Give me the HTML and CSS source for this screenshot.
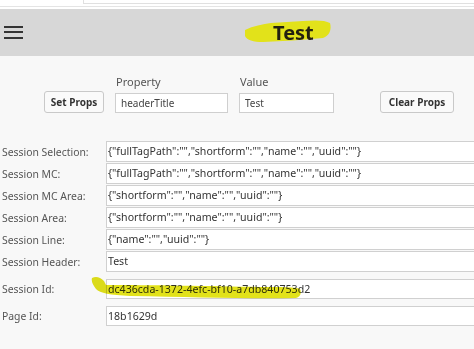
FILE: index.html
```html
<!DOCTYPE html>
<html lang="en">
<head>
    <meta charset="UTF-8">
    <meta name="viewport" content="width=device-width, initial-scale=1.0">
    <title>Session Props</title>
    <link rel="stylesheet" href="styles.css">
</head>
<body>
    <div class="chrome">
        <div class="tab-edge"></div>
    </div>

    <div class="header">
        <svg class="menu-icon" width="19" height="14" viewBox="0 0 19 14">
            <rect x="0" y="0" width="19" height="2" fill="#333"/>
            <rect x="0" y="5" width="19" height="2" fill="#333"/>
            <rect x="0" y="11" width="19" height="2" fill="#333"/>
        </svg>
        <div class="title-wrap">
            <svg class="marker marker-title" width="90" height="26" viewBox="0 0 90 26">
                <path d="M2 12 C10 8 20 6 28 5 L60 3 C72 2 82 2 87 5 C89 12 86 18 80 20 C60 22 40 23 20 24 C10 24 4 22 2 18 Z" fill="#e2e21a"/>
            </svg>
            <span class="title">Test</span>
        </div>
    </div>

    <div class="controls">
        <button class="btn btn-set" type="button">Set Props</button>
        <div class="field field-prop">
            <label for="prop">Property</label>
            <input type="text" id="prop" value="headerTitle">
        </div>
        <div class="field field-value">
            <label for="val">Value</label>
            <input type="text" id="val" value="Test">
        </div>
        <button class="btn btn-clear" type="button">Clear Props</button>
    </div>

    <div class="rows">
        <div class="row">
            <span class="row-label">Session Selection:</span>
            <div class="row-value">{"fullTagPath":"","shortform":"","name":"","uuid":""}</div>
        </div>
        <div class="row">
            <span class="row-label">Session MC:</span>
            <div class="row-value">{"fullTagPath":"","shortform":"","name":"","uuid":""}</div>
        </div>
        <div class="row">
            <span class="row-label">Session MC Area:</span>
            <div class="row-value">{"shortform":"","name":"","uuid":""}</div>
        </div>
        <div class="row">
            <span class="row-label">Session Area:</span>
            <div class="row-value">{"shortform":"","name":"","uuid":""}</div>
        </div>
        <div class="row">
            <span class="row-label">Session Line:</span>
            <div class="row-value">{"name":"","uuid":""}</div>
        </div>
        <div class="row">
            <span class="row-label">Session Header:</span>
            <div class="row-value">Test</div>
        </div>
        <div class="row row-spaced">
            <span class="row-label">Session Id:</span>
            <div class="row-value">dc436cda-1372-4efc-bf10-a7db840753d2</div>
            <svg class="marker marker-id" width="214" height="26" viewBox="0 0 214 26">
                <path d="M2 3 C6 1 10 2 14 6 L16 10 C60 10 120 11 170 12 C190 12 205 12 210 14 C212 18 210 22 206 23 C160 24 100 22 40 21 C20 20 10 18 6 14 C3 10 1 6 2 3 Z" fill="#e2e21a"/>
            </svg>
        </div>
        <div class="row row-spaced">
            <span class="row-label">Page Id:</span>
            <div class="row-value">18b1629d</div>
        </div>
    </div>
</body>
</html>
```

FILE: styles.css
```css
body {
    font-family: "Noto Sans", "Open Sans", Arial, sans-serif;
    margin: 0;
    padding: 0;
    background: #f8f8f8;
    color: #444;
    overflow: hidden;
}

/* thin browser strip above the app */
.chrome {
    height: 9px;
    background: #fff;
    border-top: 5px solid #fff;
    box-sizing: border-box;
    position: relative;
}

.chrome::before {
    content: "";
    display: block;
    height: 1px;
    background: #e4e4e4;
    margin-top: 1px;
}

.tab-edge {
    position: absolute;
    top: -5px;
    left: 83px;
    right: 0;
    height: 3px;
    border-left: 1px solid #e0e0e0;
    border-bottom: 1px solid #e0e0e0;
}

.header {
    height: 47px;
    background: #d7d7d7;
    display: flex;
    align-items: center;
    padding-left: 4px;
}

.menu-icon {
    display: block;
}

.title-wrap {
    position: relative;
    margin-left: 250px;
}

.title {
    position: relative;
    font-size: 20px;
    font-weight: bold;
    color: #221f10;
}

.marker {
    position: absolute;
    pointer-events: none;
}

.marker-title {
    left: -30px;
    top: -1px;
}

.controls {
    display: flex;
    align-items: flex-end;
    padding: 16px 0 0 44px;
    height: 57px;
    box-sizing: border-box;
}

.btn {
    font-family: inherit;
    font-size: 10px;
    font-weight: bold;
    color: #333;
    background: #fafafa;
    border: 1px solid #c9c9c9;
    border-radius: 3px;
    height: 22px;
    padding: 0;
    margin-bottom: 0;
}

.btn-set {
    width: 60px;
}

.btn-clear {
    width: 74px;
    margin-left: 46px;
}

.field {
    display: flex;
    flex-direction: column;
}

.field label {
    font-size: 11px;
    color: #555;
    margin-bottom: 4px;
    padding-left: 1px;
}

.field input {
    font-family: inherit;
    font-size: 10px;
    color: #444;
    border: 1px solid #cfcfcf;
    background: #fff;
    height: 20px;
    box-sizing: border-box;
    padding: 0 5px;
    outline: none;
}

.field-prop {
    margin-left: 11px;
}

.field-prop input {
    width: 113px;
}

.field-value {
    margin-left: 11px;
}

.field-value input {
    width: 95px;
}

.rows {
    margin-top: 28px;
}

.row {
    display: flex;
    align-items: center;
    height: 21px;
    margin-bottom: 1px;
    position: relative;
}

.row-spaced {
    margin-top: 7px;
    height: 20px;
}

.row-label {
    width: 104px;
    padding-left: 2px;
    font-size: 10.4px;
    color: #555;
}

.row-value {
    flex: 1;
    height: 100%;
    margin-right: -10px;
    box-sizing: border-box;
    border: 1px solid #d0d0d0;
    background: #fff;
    font-size: 10.6px;
    color: #333;
    padding-left: 1px;
    line-height: 19px;
    white-space: nowrap;
}

.marker-id {
    left: 90px;
    top: -4px;
    mix-blend-mode: multiply;
}
```
